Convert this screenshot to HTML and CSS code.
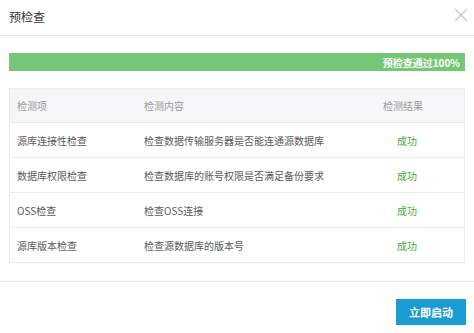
FILE: index.html
```html
<!DOCTYPE html>
<html lang="zh-CN">
<head>
  <meta charset="UTF-8" />
  <title>预检查</title>
  <link rel="stylesheet" href="styles.css">
</head>
<body>
  <div class="dialog">
    <div class="dialog-header">
      <div class="dialog-title">预检查</div>
      <span class="close">
        <svg width="14" height="14" viewBox="0 0 14 14"><path d="M1 1L13 13M13 1L1 13" stroke="#c8c8c8" stroke-width="1.2" fill="none"/></svg>
      </span>
    </div>

    <div class="dialog-body">
      <div class="progress">
        <span class="progress-text">预检查通过100%</span>
      </div>

      <div class="check-table">
        <div class="row head">
          <div class="cell name">检测项</div>
          <div class="cell desc">检测内容</div>
          <div class="cell result">检测结果</div>
        </div>
        <div class="row">
          <div class="cell name">源库连接性检查</div>
          <div class="cell desc">检查数据传输服务器是否能连通源数据库</div>
          <div class="cell result ok">成功</div>
        </div>
        <div class="row">
          <div class="cell name">数据库权限检查</div>
          <div class="cell desc">检查数据库的账号权限是否满足备份要求</div>
          <div class="cell result ok">成功</div>
        </div>
        <div class="row">
          <div class="cell name">OSS检查</div>
          <div class="cell desc">检查OSS连接</div>
          <div class="cell result ok">成功</div>
        </div>
        <div class="row">
          <div class="cell name">源库版本检查</div>
          <div class="cell desc">检查源数据库的版本号</div>
          <div class="cell result ok">成功</div>
        </div>
      </div>
    </div>

    <div class="dialog-footer">
      <button class="btn-primary">立即启动</button>
    </div>
  </div>
</body>
</html>
```

FILE: styles.css
```css
html, body {
  margin: 0;
  padding: 0;
  background: #fff;
  font-family: "Noto Sans CJK SC", "Noto Sans", sans-serif;
}

.dialog {
  width: 474px;
  height: 333px;
  display: flex;
  flex-direction: column;
  box-sizing: border-box;
}

.dialog-header {
  height: 36px;
  display: flex;
  align-items: center;
  justify-content: space-between;
  padding: 0 6px 2px 9px;
  border-bottom: 1px solid #e6e6e6;
  box-sizing: border-box;
}

.dialog-title {
  font-size: 12px;
  color: #333;
}

.close {
  display: flex;
  margin-top: -4px;
}

.dialog-body {
  padding: 17px 9px 18px 9px;
  border-bottom: 1px solid #e6e6e6;
}

.progress {
  height: 18px;
  background: #75c775;
  display: flex;
  align-items: center;
  justify-content: flex-end;
  padding-right: 5px;
}

.progress-text {
  font-size: 10px;
  color: #fff;
  font-weight: bold;
}

.check-table {
  margin-top: 17px;
  border: 1px solid #ebebeb;
  border-top: none;
}

.row {
  display: flex;
  height: 34px;
  align-items: center;
  border-top: 1px solid #ebebeb;
  font-size: 10px;
  color: #5a5a5a;
}

.row.head {
  height: 33px;
  background: #f5f6f8;
  color: #999;
  border-top-color: #f0f0f0;
}

.cell.name {
  width: 120px;
  padding-left: 7px;
}

.cell.desc {
  width: 231px;
  padding-left: 7px;
}

.cell.result {
  padding-left: 8px;
}

.cell.ok {
  padding-left: 22px;
  color: #4aa83a;
}

.dialog-footer {
  flex: 1;
  display: flex;
  justify-content: flex-end;
  padding: 17px 8px 0 0;
}

.btn-primary {
  width: 70px;
  height: 26px;
  border: none;
  background: #1a9bd3;
  color: #fff;
  font-family: inherit;
  font-size: 11px;
  font-weight: bold;
  cursor: pointer;
}
```
